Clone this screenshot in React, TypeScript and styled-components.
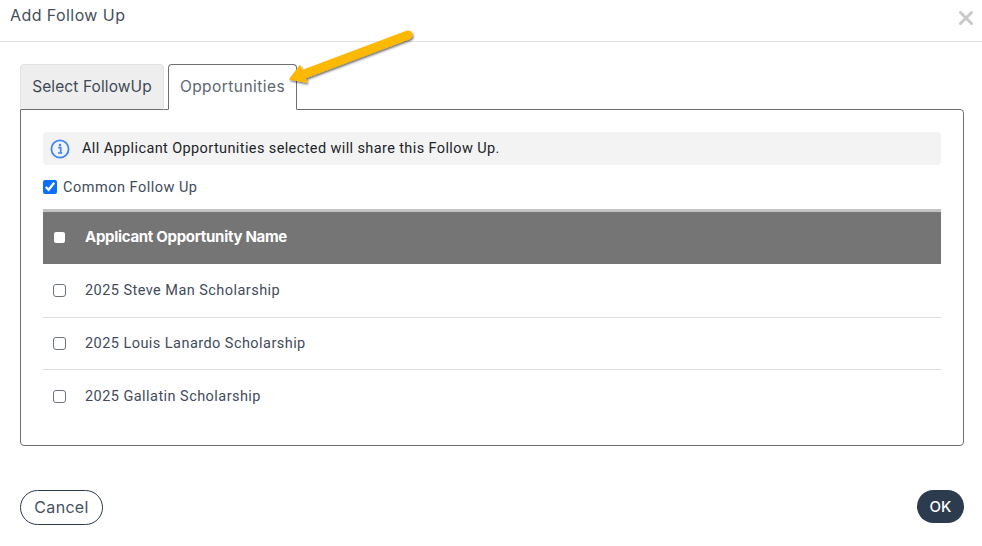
import React from "react";
import styled, { createGlobalStyle } from "styled-components";
import { X } from "lucide-react";

const opportunities: string[] = [
  "2025 Steve Man Scholarship",
  "2025 Louis Lanardo Scholarship",
  "2025 Gallatin Scholarship",
];

const GlobalStyle = createGlobalStyle`
  html, body {
    margin: 0;
    padding: 0;
    background: #fff;
    overflow: hidden;
  }
  * {
    box-sizing: border-box;
  }
`;

function App() {
  return (
    <Modal>
      <GlobalStyle />
      <Header>
        <Title>Add Follow Up</Title>
        <Close>
          <X size={22} strokeWidth={3.2} />
        </Close>
      </Header>
      <Body>
        <Tabs>
          <Tab $width={144}>Select FollowUp</Tab>
          <Tab $width={129} $active>Opportunities</Tab>
        </Tabs>
        <Arrow width="130" height="72" viewBox="0 0 130 72">
          <defs>
            <filter id="shade" x="-20%" y="-20%" width="140%" height="140%">
              <feDropShadow dx="1" dy="1.5" stdDeviation="1" floodColor="#000" floodOpacity="0.6" />
            </filter>
          </defs>
          <g filter="url(#shade)">
            <path d="M123 15 L14 56" stroke="#fdb900" strokeWidth="9" strokeLinecap="round" fill="none" />
            <path d="M5 59 L15 46 L21.5 62 Z" fill="#fdb900" stroke="#fdb900" strokeWidth="1.5" strokeLinejoin="round" />
          </g>
        </Arrow>
        <Panel>
          <InfoBar>
            <svg width="20" height="20" viewBox="0 0 20 20" fill="none">
              <circle cx="10" cy="10" r="8.6" stroke="#3f87f5" strokeWidth="1.8" />
              <circle cx="10" cy="5.9" r="1.25" fill="#3f87f5" />
              <path d="M8.2 8.7h2.5v5.2M8 14h4.2" stroke="#3f87f5" strokeWidth="1.7" />
            </svg>
            <InfoText>All Applicant Opportunities selected will share this Follow Up.</InfoText>
          </InfoBar>
          <CommonRow>
            <BlueCheck type="checkbox" defaultChecked />
            <CommonLabel>Common Follow Up</CommonLabel>
          </CommonRow>
          <Table>
            <HeadRow>
              <HeadBox />
              <HeadLabel>Applicant Opportunity Name</HeadLabel>
            </HeadRow>
            {opportunities.map((name) => (
              <Row key={name}>
                <RowBox />
                <RowLabel>{name}</RowLabel>
              </Row>
            ))}
          </Table>
        </Panel>
        <Footer>
          <CancelButton>Cancel</CancelButton>
          <OkButton>OK</OkButton>
        </Footer>
      </Body>
    </Modal>
  );
}

export default App;

const Modal = styled.div`
  width: 982px;
  height: 546px;
  background: #fff;
  overflow: hidden;
`;

const Header = styled.div`
  height: 42px;
  padding: 0 5px 0 10px;
  border-bottom: 1px solid #e3e3e3;
  display: flex;
  justify-content: space-between;
`;

const Title = styled.div`
  font-family: "Inter", "Liberation Sans", sans-serif;
  font-size: 16px;
  letter-spacing: 0.42px;
  line-height: 30px;
  color: #454f5b;
`;

const Close = styled.div`
  color: #c9c9c9;
  padding-top: 7px;
  height: 30px;
`;

const Body = styled.div`
  position: relative;
  padding: 22px 18px 0 20px;
`;

const Tabs = styled.div`
  display: flex;
  gap: 4px;
  height: 46px;
  margin-bottom: -1px;
  position: relative;
  z-index: 1;
`;

const Tab = styled.div<{ $active?: boolean; $width: number }>`
  width: ${(p) => p.$width}px;
  height: 46px;
  padding-bottom: 2px;
  display: flex;
  align-items: center;
  justify-content: center;
  font-family: "Inter", "Liberation Sans", sans-serif;
  font-size: 15.5px;
  letter-spacing: ${(p) => (p.$active ? "0.45px" : "0.1px")};
  color: ${(p) => (p.$active ? "#5d6671" : "#3f4a56")};
  background: ${(p) => (p.$active ? "#fff" : "#eeeeee")};
  border: 1px solid ${(p) => (p.$active ? "#6f6f6f" : "#e2e2e2")};
  border-bottom: ${(p) => (p.$active ? "1px solid #fff" : "1px solid #6f6f6f")};
  border-radius: 4px 4px 0 0;
`;

const Arrow = styled.svg`
  position: absolute;
  left: 285px;
  top: -22px;
  z-index: 2;
`;

const Panel = styled.div`
  height: 337px;
  padding: 22px 22px 0;
  border: 1px solid #6f6f6f;
  border-radius: 0 4px 4px 4px;
`;

const InfoBar = styled.div`
  height: 33px;
  padding: 0 7px;
  display: flex;
  align-items: center;
  gap: 12px;
  background: #f3f3f3;
  border-radius: 4px;
`;

const InfoText = styled.span`
  font-family: "Roboto", "Liberation Sans", sans-serif;
  font-size: 14.5px;
  letter-spacing: 0.39px;
  line-height: 34px;
  color: #212529;
`;

const CommonRow = styled.label`
  height: 44px;
  display: flex;
  align-items: center;
  gap: 6px;
`;

const BlueCheck = styled.input`
  width: 14px;
  height: 14px;
  margin: 0;
  accent-color: #0d6efd;
`;

const CommonLabel = styled.span`
  font-family: "Roboto", "Liberation Sans", sans-serif;
  font-size: 14.5px;
  letter-spacing: 0.5px;
  color: #3f4c5c;
`;

const Table = styled.div`
  display: flex;
  flex-direction: column;
`;

const HeadRow = styled.div`
  height: 55px;
  display: flex;
  align-items: center;
  padding-left: 11px;
  gap: 20px;
  background: #757575;
  border-top: 3px solid #c4c4c4;
`;

const HeadBox = styled.span`
  width: 11px;
  height: 11px;
  margin-top: -1px;
  background: #fff;
  border-radius: 2px;
`;

const HeadLabel = styled.span`
  font-family: "Inter", "Liberation Sans", sans-serif;
  font-size: 15px;
  font-weight: 700;
  letter-spacing: -0.3px;
  line-height: 20px;
  margin-top: -2px;
  color: #fff;
`;

const Row = styled.div`
  height: 53px;
  display: flex;
  align-items: center;
  padding-left: 10px;
  gap: 19px;
  border-bottom: 1px solid #dedede;

  ${HeadRow} + & {
    height: 54px;
  }

  &:nth-child(3) {
    height: 52px;
  }

  &:last-child {
    border-bottom: none;
  }
`;

const RowBox = styled.span`
  width: 13px;
  height: 13px;
  background: #fff;
  border: 1px solid #6c757d;
  border-radius: 3px;
`;

const RowLabel = styled.span`
  font-family: "Roboto", "Liberation Sans", sans-serif;
  font-size: 14.5px;
  letter-spacing: 0.45px;
  line-height: 22px;
  color: #3f4c5c;
`;

const Footer = styled.div`
  margin-top: 44px;
  display: flex;
  justify-content: space-between;
  align-items: flex-start;
`;

const CancelButton = styled.button`
  width: 83px;
  height: 35px;
  padding: 0 0 2px;
  background: #fff;
  border: 1px solid #2d3b4e;
  border-radius: 18px;
  font-family: "Inter", "Liberation Sans", sans-serif;
  font-size: 16px;
  letter-spacing: 0.3px;
  color: #46525f;
`;

const OkButton = styled.button`
  width: 47px;
  height: 33px;
  padding: 0;
  background: #2d3b4e;
  border: none;
  border-radius: 17px;
  font-family: "Inter", "Liberation Sans", sans-serif;
  font-size: 15px;
  font-weight: 500;
  color: #fff;
`;
